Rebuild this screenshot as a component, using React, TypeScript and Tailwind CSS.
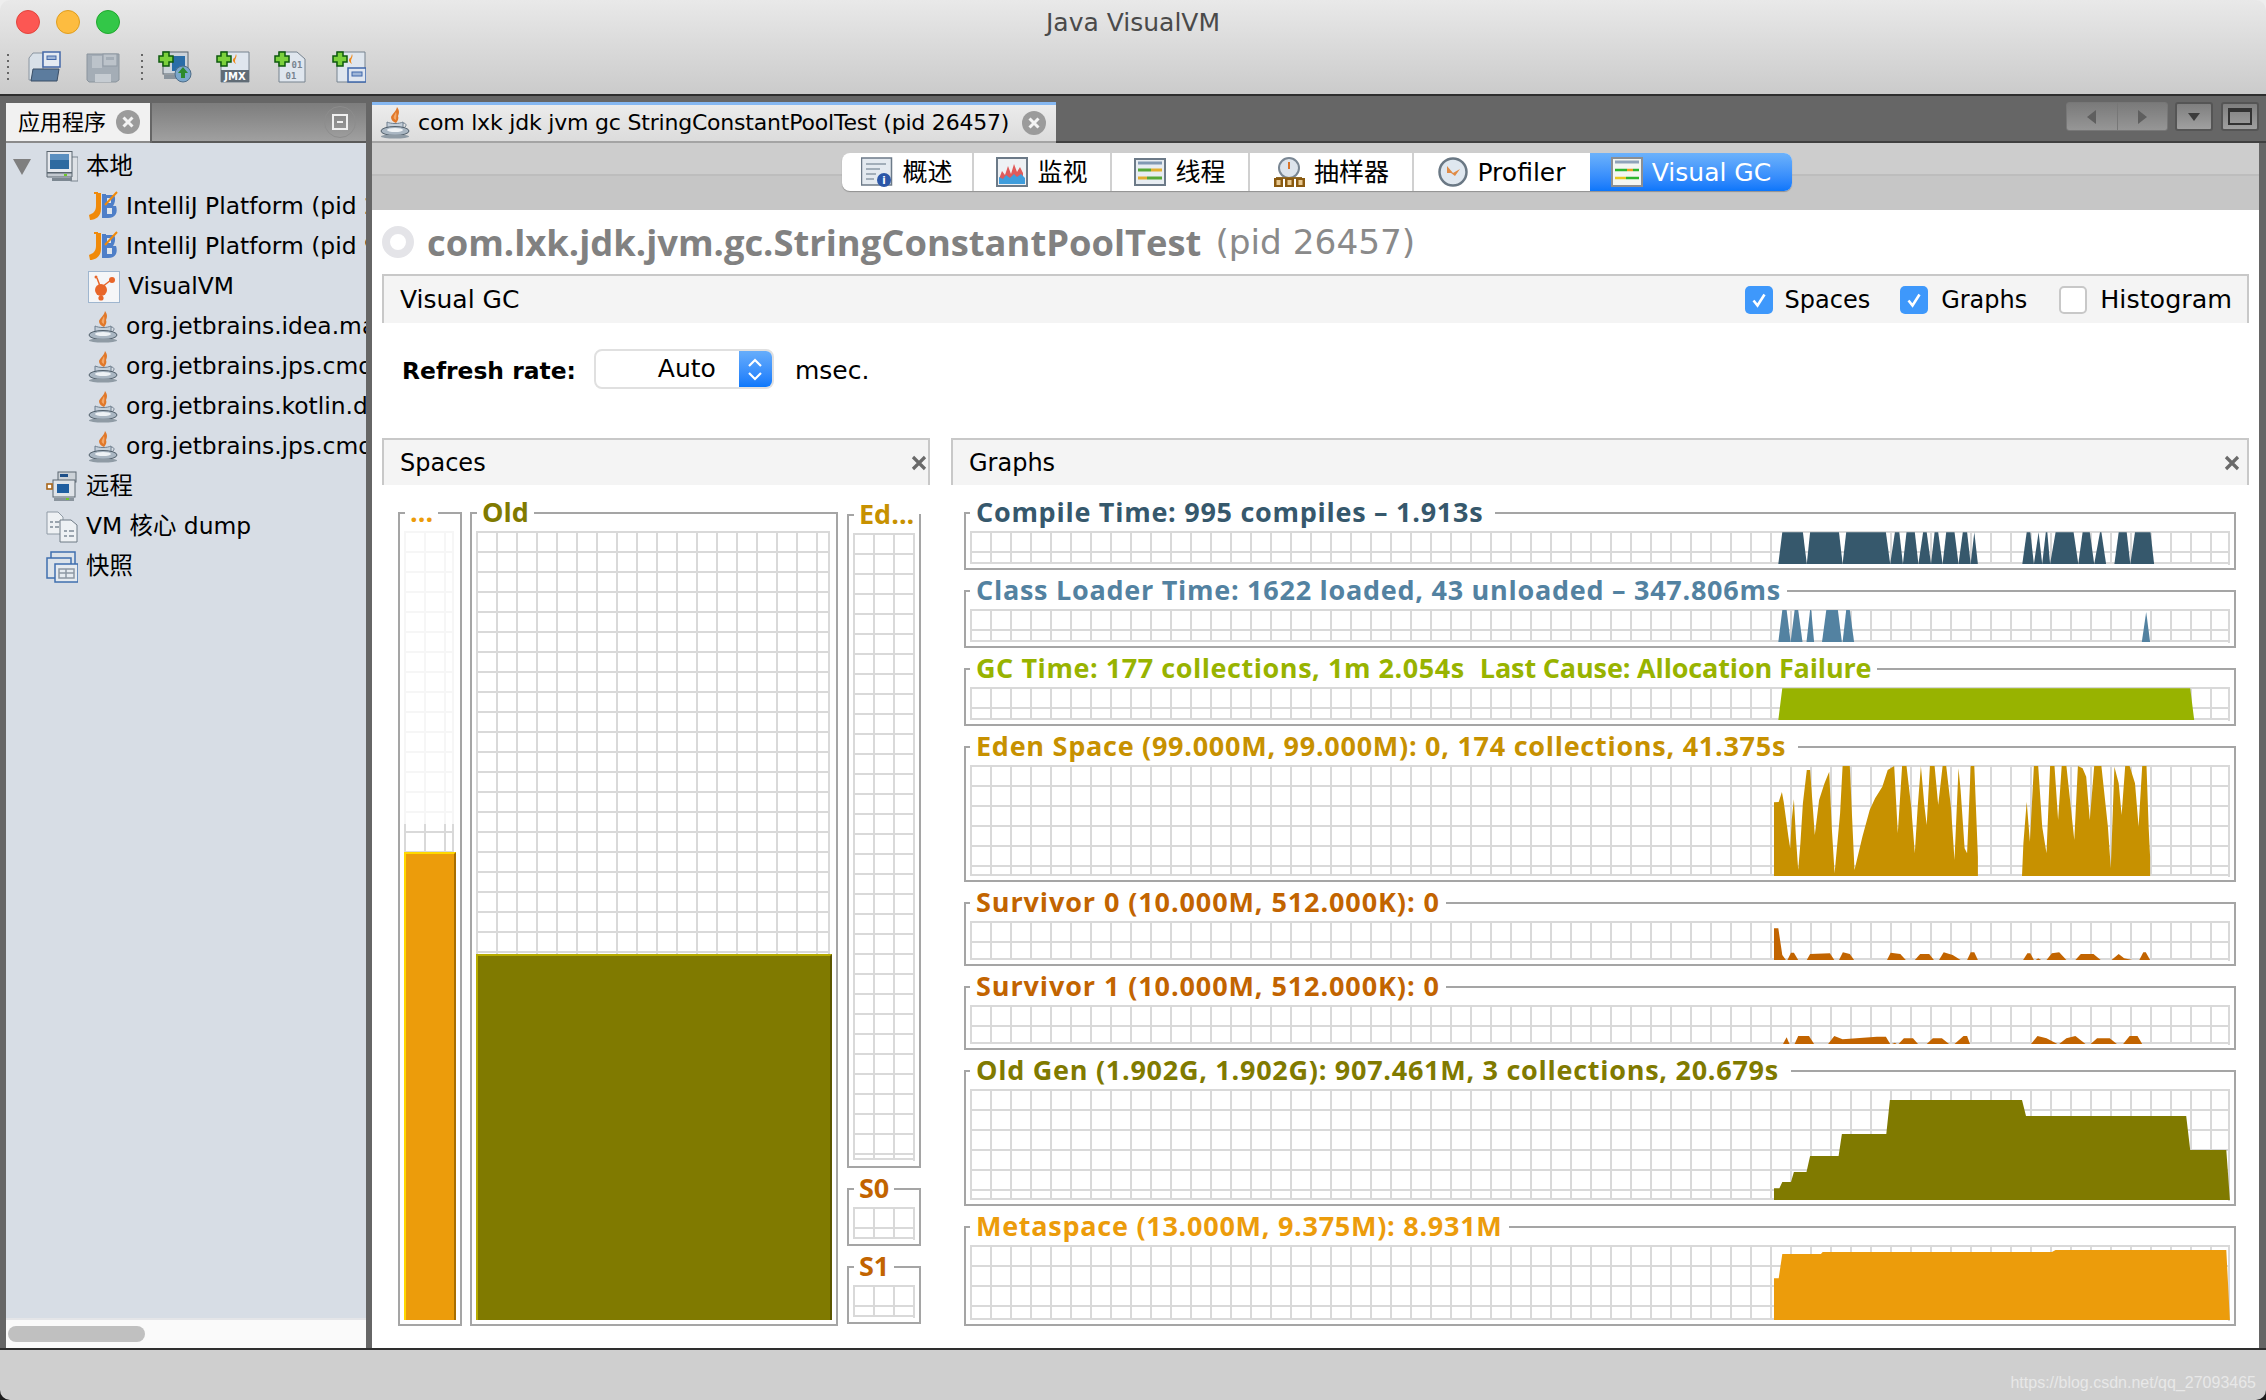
import React from "react";

type P = [number, number];
const zx = (x: number) => 1700 + x / 2.7703;

const C = {
  compile: "#36586c",
  cls: "#5382a1",
  gc: "#98b300",
  eden: "#c79100",
  surv: "#c26400",
  old: "#807a00",
  meta: "#ec9c0b",
};

function Grid({ w, h, fade }: { w: number; h: number; fade?: number }) {
  const v: number[] = [];
  for (let x = 1; x < w; x += 20) v.push(x);
  const hz: number[] = [];
  for (let y = 1; y < h - 4; y += 20) hz.push(y);
  return (
    <g stroke="#d9d9d9" strokeWidth="2" shapeRendering="crispEdges">
      {v.map((x) => (
        <line key={"v" + x} x1={x} x2={x} y1={0} y2={h - 2} />
      ))}
      {hz.map((y) => (
        <line key={"h" + y} x1={0} x2={w} y1={y} y2={y} />
      ))}
      <line x1={0} x2={w} y1={h - 2} y2={h - 2} />
      <line x1={w - 1} x2={w - 1} y1={0} y2={h} />
      {fade ? <rect x={0} y={0} width={w} height={fade} fill="#ffffff" fillOpacity="0.75" stroke="none" /> : null}
    </g>
  );
}

function trap(a: number, b: number, c: number, d: number, top: number, bot: number): P[] {
  return [[a, bot], [b, top], [c, top], [d, bot]];
}

function hump(pts: number[], bot: number): P[] {
  const r: P[] = [];
  for (let i = 0; i < pts.length; i += 2) r.push([pts[i], pts[i + 1]]);
  return r.map((p) => [p[0], p[1] >= bot ? bot : p[1]]);
}

function Chart({ w = 1262, h, baseY, top, color, shapes }: { w?: number; h: number; baseY: number; top: number; color: string; shapes: P[][] }) {
  return (
    <svg width={w} height={h} className="block">
      <Grid w={w - 2} h={h} />
      {shapes.map((s, i) => (
        <polygon
          key={i}
          fill={color}
          points={s.map(([x, y]) => `${(zx(x) - 970).toFixed(1)},${(baseY + y / 3 - top).toFixed(1)}`).join(" ")}
        />
      ))}
    </svg>
  );
}

const compileShapes: P[][] = [
  [217, 228, 285, 296], [296, 305, 385, 395], [395, 405, 515, 527], [527, 540, 552, 562], [562, 572, 595, 605],
  [605, 618, 628, 640], [640, 650, 660, 672], [672, 682, 705, 716], [716, 728, 740, 750], [750, 760, 760, 770],
  [893, 905, 915, 925], [925, 938, 938, 948], [948, 958, 962, 970], [970, 985, 1035, 1048], [1048, 1060, 1080, 1092],
  [1092, 1108, 1112, 1125], [1148, 1160, 1182, 1192], [1192, 1205, 1248, 1258],
].map(([a, b, c, d]) => trap(a, b, c, d, 127, 222));

const classShapes: P[][] = [
  ...[[217, 228, 240, 251], [251, 262, 272, 284], [295, 305, 308, 316], [338, 350, 382, 393], [395, 405, 415, 427]].map(([a, b, c, d]) =>
    trap(a, b, c, d, 360, 456)
  ),
  trap(1224, 1236, 1236, 1247, 366, 456),
];

const gcShapes: P[][] = [trap(217, 228, 1358, 1369, 595, 690)];

const edenShapes: P[][] = [
  hump([205,1158,205,937,218,936,227,906,232,935,245,1040,250,1075,254,990,260,928,266,1045,272,1140,278,1060,285,940,296,840,305,840,318,1035,330,930,345,880,358,845,365,1015,373,1150,388,970,395,828,415,828,420,950,428,1140,450,1040,470,960,485,925,505,890,520,840,538,828,548,1030,560,828,572,828,585,950,595,1090,603,950,612,828,622,950,628,1005,637,828,650,828,660,945,672,828,682,828,695,950,705,1110,716,835,722,900,733,1075,740,1090,750,828,760,828,770,1100,770,1158], 1158),
  hump([892,1158,896,1060,905,935,914,1055,925,828,937,828,948,1010,960,1090,970,828,982,828,992,990,1002,828,1015,828,1037,1050,1047,828,1060,835,1070,860,1080,990,1092,828,1112,828,1130,1010,1138,1135,1148,830,1160,880,1168,975,1178,828,1190,828,1205,880,1215,1010,1225,828,1237,828,1243,1015,1247,1100,1247,1158], 1158),
];

const s0Shapes: P[][] = [
  [205,240,205,145,217,145,228,225,238,240],[242,240,252,218,260,218,272,240],[296,240,305,222,360,220,372,240],[385,240,396,217,415,222,427,240],[518,240,528,218,555,222,570,240],[595,240,610,222,635,222,648,240],[662,240,675,217,700,225,722,240],[740,240,750,217,760,217,770,240],[895,240,907,220,915,220,925,240],[930,240,937,235,945,240],[960,240,975,220,995,217,1015,240],[1040,240,1055,222,1090,222,1110,240],[1140,240,1160,222,1175,235,1198,240],[1217,240,1228,217,1235,217,1247,240],
].map((a) => hump(a, 240));

const s1Shapes: P[][] = [
  [230,492,240,472,248,492],[262,492,272,468,302,468,316,492],[355,492,372,468,395,478,490,470,515,470,527,492],[532,492,540,488,545,492],[550,492,565,475,590,475,604,492],[628,492,645,475,670,475,690,492],[705,492,730,468,740,468,748,492],[917,492,935,468,960,475,990,492],[995,492,1015,475,1040,468,1068,492],[1082,492,1100,475,1135,475,1155,492],[1172,492,1190,468,1212,468,1225,492],
].map((a) => hump(a, 492));

const oldShapes: P[][] = [
  hump([205,960,205,925,220,925,228,906,252,906,260,876,295,876,305,828,384,828,393,762,516,762,526,660,892,660,903,708,1347,708,1358,810,1458,810,1468,960], 960),
];
const metaShapes: P[][] = [
  hump([205,1320,205,1195,218,1195,228,1122,335,1122,340,1116,975,1116,985,1110,1458,1110,1468,1320], 1320),
];

function GraphFrame({ title, color, wide, children }: { title: React.ReactNode; color: string; wide?: boolean; children: React.ReactNode }) {
  return (
    <div className="relative border-2 border-[#a5a5a5] pl-[4px] pt-[17px] pb-[3px]">
      <span
        className={`absolute left-[4px] top-[-19px] h-[34px] bg-white pl-[6px] whitespace-pre text-[27px] leading-[34px] font-bold tracking-[0.73px] ${wide ? "pr-[12px]" : "pr-[6px]"}`}
        style={{ color, fontFamily: "'Open Sans', sans-serif" }}
      >
        {title}
      </span>
      {children}
    </div>
  );
}

function SpaceFrame({ title, color, className, w, h, fill, fade, gridTop }: { title: string; color: string; className: string; w: number; h: number; fill?: number; fade?: number; gridTop: string }) {
  return (
    <div className={`relative border-2 border-[#a5a5a5] ${className}`}>
      <span
        className="absolute left-[5px] top-[-19px] h-[34px] bg-white px-[5px] whitespace-pre text-[27px] leading-[34px] font-bold"
        style={{ color, fontFamily: "'Open Sans', sans-serif" }}
      >
        {title}
      </span>
      <div className={`ml-[4px] relative w-fit ${gridTop}`}>
        <svg width={w} height={h} className="block">
          <Grid w={w} h={h} fade={fade} />
        </svg>
        {fill ? (
          <div
            className="absolute left-0 right-[-2px] bottom-0 border-t-2 border-l-2 border-r-2"
            style={{
              height: fill,
              background: color,
              borderTopColor: title === "Old" ? "#b8ac00" : "#ffd800",
              borderLeftColor: title === "Old" ? "#b8ac00" : "#ffd800",
              borderRightColor: title === "Old" ? "#5c5600" : "#a86e00",
            }}
          />
        ) : null}
      </div>
    </div>
  );
}

/* ---------- icons ---------- */
function JavaCup() {
  return (
    <svg width="30" height="32" viewBox="0 0 30 32" className="shrink-0">
      <path d="M17 0c3 4 2 7 1 9 1 2 0 5-2 7-3-1-5-3-5-6 1-3 5-5 6-10z" fill="#e0782a" />
      <path d="M16 5c1 3 0 5 0 8-2-1-3-2-2-4z" fill="#f4a868" />
      <path d="M7 15c4 2 12 2 16 0v5c-1 4-14 4-16 0z" fill="#c4cfda" stroke="#6f7f8e" />
      <path d="M23 16c4 0 4 4 0 5" fill="none" stroke="#6f7f8e" />
      <ellipse cx="15" cy="24" rx="14" ry="4.5" fill="#aab7c3" stroke="#52606c" />
      <ellipse cx="15" cy="23" rx="8" ry="2" fill="#eef2f5" />
      <ellipse cx="15" cy="29.5" rx="14" ry="2" fill="#8f9ba5" />
    </svg>
  );
}
function IJIcon() {
  return (
    <svg width="30" height="32" viewBox="0 0 30 32" className="shrink-0">
      <path d="M14 3h4v12h10c2 6 0 12-8 12h-6z" fill="#4f7fc8" />
      <path d="M19 6h5v5h-5zM19 17h5v6h-5z" fill="#dfe5ec" />
      <path d="M14 4h12c2 3 1 8-1 11H14z" fill="#4f7fc8" />
      <path d="M19 7h4v5h-4z" fill="#dfe5ec" />
      <path d="M8 2h5v16c0 7-5 11-11 11l-1-5 4-2c2-2 3-4 3-7z" fill="#f08a0a" />
      <path d="M6 2h4M17 14L29 1" stroke="#f08a0a" strokeWidth="2" />
    </svg>
  );
}
function VVMIcon() {
  return (
    <svg width="32" height="32" viewBox="0 0 32 32" className="shrink-0">
      <rect x="0.5" y="0.5" width="31" height="31" fill="#f5f6f8" stroke="#9fb6cf" />
      <circle cx="13" cy="19" r="6" fill="#e8662a" />
      <circle cx="13" cy="27" r="2.6" fill="#e8662a" />
      <circle cx="24" cy="9" r="3" fill="#e8662a" />
      <circle cx="8" cy="6" r="1.5" fill="#e8662a" />
      <path d="M14 16l9-7M9 7l3 8" stroke="#e8662a" strokeWidth="1.5" />
    </svg>
  );
}
function ComputerIcon() {
  return (
    <svg width="32" height="32" viewBox="0 0 32 32" className="shrink-0">
      <rect x="25" y="6" width="7" height="24" fill="#dde1e6" stroke="#7a8590" />
      <rect x="1" y="0.5" width="25" height="21" fill="#e6e9ee" stroke="#5b6670" />
      <rect x="4" y="3" width="19" height="15" fill="#2e6aa0" />
      <rect x="4" y="3" width="19" height="6" fill="#5a8fc0" />
      <path d="M1 22h25v4H1z" fill="#c3c9d0" stroke="#5b6670" />
      <rect x="18" y="23" width="3" height="2" fill="#6ec82a" />
      <path d="M6 27h20v3H6z" fill="#7c8791" />
    </svg>
  );
}
function RemoteIcon() {
  return (
    <svg width="32" height="32" viewBox="0 0 32 32" className="shrink-0">
      <rect x="12" y="1" width="18" height="10" fill="#ccd2d8" stroke="#5b6670" />
      <rect x="14" y="3" width="8" height="3" fill="#1e4f88" />
      <rect x="7" y="9" width="22" height="17" fill="#dfe3e8" stroke="#5b6670" />
      <rect x="11" y="13" width="12" height="9" fill="#1f5ea0" />
      <rect x="1" y="13" width="5" height="5" fill="#fff" stroke="#a8651a" strokeWidth="1.6" />
      <path d="M8 27h20v3H8z" fill="#8a949d" />
      <rect x="20" y="27" width="3" height="2" fill="#6ec82a" />
    </svg>
  );
}
function DumpIcon() {
  return (
    <svg width="32" height="32" viewBox="0 0 32 32" className="shrink-0">
      <path d="M1 1h11l5 5v17H1z" fill="#eef1f4" stroke="#8f9aa5" />
      <path d="M14 9h11l6 5v17H14z" fill="#eef1f4" stroke="#6f7a85" />
      <path d="M4 11h3M9 11h5M4 16h3M9 16h4M18 20h3M23 20h5M18 25h3M23 25h5" stroke="#9aa4ae" strokeWidth="2" />
    </svg>
  );
}
function SnapIcon() {
  return (
    <svg width="32" height="32" viewBox="0 0 32 32" className="shrink-0">
      <rect x="5" y="1" width="24" height="20" fill="#dce3ea" stroke="#3f6fae" strokeWidth="1.5" />
      <rect x="1" y="7" width="24" height="20" fill="#dce3ea" stroke="#3f6fae" strokeWidth="1.5" />
      <rect x="9" y="13" width="23" height="18" fill="#e6ebf0" stroke="#3f6fae" strokeWidth="1.5" />
      <path d="M13 18h15v9H13zM20 18v9M13 22h15" fill="none" stroke="#8d98a3" strokeWidth="1.5" />
    </svg>
  );
}
function Plus() {
  return <path d="M5 1h6v4h4v6h-4v4H5v-4H1V5h4z" fill="#7bd13c" stroke="#0e5a0e" strokeWidth="1.5" />;
}
function TbOpen() {
  return (
    <svg width="34" height="32" viewBox="0 0 34 32">
      <path d="M1 29V7l4-5h10v26z" fill="#d8e0e8" stroke="#8a95a0" />
      <rect x="15" y="1" width="17" height="15" fill="#e4eaf2" stroke="#4468a8" strokeWidth="1.5" />
      <rect x="19" y="5" width="9" height="3.5" fill="#9fb6d8" stroke="#4468a8" />
      <path d="M5 18h26l-2 12H3z" fill="#5c7c9e" stroke="#3a4e66" />
    </svg>
  );
}
function TbSave() {
  return (
    <svg width="34" height="32" viewBox="0 0 34 32">
      <path d="M1 3h32v26l-3 2H3l-2-2z" fill="#a4adb6" stroke="#8a949d" />
      <path d="M6 5h10v12H6z" fill="#bcc3ca" />
      <rect x="17" y="3" width="14" height="12" fill="#bcc3ca" stroke="#8f99a3" />
      <rect x="20" y="6" width="8" height="3" fill="#a4adb6" />
      <path d="M9 23h16v8H9z" fill="#c6ccd2" />
    </svg>
  );
}
function TbConnect() {
  return (
    <svg width="34" height="32" viewBox="0 0 34 32">
      <rect x="5" y="1" width="25" height="22" fill="#ccd3da" stroke="#5b6670" />
      <rect x="14" y="5" width="13" height="15" fill="#2a6da8" />
      <path d="M6 24h24v4H6z" fill="#8a949d" />
      <circle cx="25" cy="23" r="8" fill="#7aa7cc" stroke="#4d6c88" />
      <path d="M25 16l5 6h-3v5h-4v-5h-3z" fill="#2d8a2d" />
      <Plus />
    </svg>
  );
}
function TbJava({ kind }: { kind: "jmx" | "bin" | "snap" }) {
  return (
    <svg width="34" height="32" viewBox="0 0 34 32">
      <path d={kind === "bin" ? "M5 1h18l8 7v23H5z" : "M5 1h28v30H5z"} fill="#dfe6ee" stroke="#77838f" />
      {kind !== "bin" ? <path d="M20 3c2 4-3 5 0 10-3-2-4-4-2-6 1 0 1-1 2-4z" fill="#ef8a1c" /> : null}
      {kind === "jmx" ? (
        <>
          <rect x="5" y="19" width="28" height="12" fill="#616c76" />
          <text x="19" y="29" fontSize="10" fontWeight="bold" fill="#fff" textAnchor="middle" fontFamily="DejaVu Sans">JMX</text>
        </>
      ) : null}
      {kind === "bin" ? (
        <>
          <text x="23" y="17" fontSize="9" fontWeight="bold" fill="#77838f" textAnchor="middle" fontFamily="DejaVu Sans Mono">01</text>
          <text x="17" y="28" fontSize="9" fontWeight="bold" fill="#77838f" textAnchor="middle" fontFamily="DejaVu Sans Mono">01</text>
        </>
      ) : null}
      {kind === "snap" ? (
        <>
          <rect x="16" y="17" width="18" height="14" fill="#dfe6f0" stroke="#3f67aa" strokeWidth="1.5" />
          <rect x="20" y="21" width="10" height="4" fill="#9fb6d8" stroke="#3f67aa" />
        </>
      ) : null}
      <Plus />
    </svg>
  );
}
function Grip() {
  return (
    <div className="flex h-[26px] w-[2px] flex-col justify-between">
      {[0, 1, 2, 3, 4].map((i) => (
        <div key={i} className="h-[2px] w-[2px] bg-[#666]" />
      ))}
    </div>
  );
}
function OverviewIcon() {
  return (
    <svg width="32" height="30" viewBox="0 0 32 30" className="shrink-0">
      <rect x="0.5" y="1" width="30" height="27" fill="#e4eaf0" stroke="#6c7a88" strokeWidth="1.5" />
      <path d="M5 7h20M5 12h14M5 17h10M5 22h8" stroke="#a2aeb9" strokeWidth="2" />
      <circle cx="23" cy="23" r="7" fill="#2c57a8" />
      <text x="23" y="27" fontSize="10" fontWeight="bold" fill="#fff" textAnchor="middle" fontFamily="DejaVu Sans">i</text>
    </svg>
  );
}
function MonitorIcon() {
  return (
    <svg width="32" height="30" viewBox="0 0 32 30" className="shrink-0">
      <rect x="1" y="1" width="30" height="28" fill="#eef1f4" stroke="#6c7a88" strokeWidth="2" />
      <path d="M3 22l3-8 3 4 3-9 3 8 3-10 3 8 3-5 3 6v11H3z" fill="#e05a5a" />
      <path d="M3 27v-7l4 2 3-4 4 3 4-4 3 3 4-3 4 4v6z" fill="#3f9ddc" />
    </svg>
  );
}
function ThreadsIcon() {
  return (
    <svg width="32" height="28" viewBox="0 0 32 28" className="shrink-0">
      <rect x="1" y="1" width="30" height="26" fill="#e8edf2" stroke="#6c7a88" strokeWidth="2" />
      <path d="M4 5h24" stroke="#8199b3" strokeWidth="3" />
      <path d="M4 12h13" stroke="#56a838" strokeWidth="3" />
      <path d="M17 12h11" stroke="#e0b030" strokeWidth="3" />
      <path d="M4 20h9" stroke="#e0b030" strokeWidth="3" />
      <path d="M13 20h15" stroke="#56a838" strokeWidth="3" />
    </svg>
  );
}
function SamplerIcon() {
  return (
    <svg width="32" height="30" viewBox="0 0 32 30" className="shrink-0">
      <circle cx="16" cy="11" r="10" fill="#dde4ec" stroke="#7a8794" strokeWidth="2" />
      <path d="M16 5v7" stroke="#d8742a" strokeWidth="2" />
      <path d="M3 21h26" stroke="#8f6a2a" strokeWidth="2" />
      {[0, 11, 22].map((x) => (
        <g key={x}>
          <rect x={x + 1} y="21" width="9" height="9" fill="#8a5a10" />
          <rect x={x + 3.5} y="23" width="4" height="5" fill="#e8c890" />
        </g>
      ))}
    </svg>
  );
}
function ClockIcon() {
  return (
    <svg width="30" height="30" viewBox="0 0 30 30" className="shrink-0">
      <circle cx="15" cy="15" r="13.5" fill="#dfe7ef" stroke="#6a7884" strokeWidth="2.5" />
      <path d="M9 9l6 7 7-4-5 7-4-3-4 0z" fill="#e08a44" />
    </svg>
  );
}
function GcIcon() {
  return (
    <svg width="32" height="30" viewBox="0 0 32 30" className="shrink-0">
      <rect x="1" y="1" width="30" height="28" fill="#f3f6f2" stroke="#8c8f92" strokeWidth="2" />
      <path d="M4 5h24" stroke="#8fa3ba" strokeWidth="3" />
      <path d="M4 13h12" stroke="#2cb52c" strokeWidth="2.5" />
      <path d="M16 13h6" stroke="#e8a020" strokeWidth="2.5" />
      <path d="M22 13h6" stroke="#2cb52c" strokeWidth="2.5" />
      <path d="M4 21h11" stroke="#e8c820" strokeWidth="2.5" />
      <path d="M15 21h13" stroke="#2cb52c" strokeWidth="2.5" />
    </svg>
  );
}
function CloseDot({ className = "" }: { className?: string }) {
  return (
    <svg width="24" height="24" viewBox="0 0 24 24" className={`shrink-0 ${className}`}>
      <circle cx="12" cy="12" r="12" fill="#9b9b9b" />
      <path d="M7.5 7.5l9 9M16.5 7.5l-9 9" stroke="#f4f4f4" strokeWidth="3" />
    </svg>
  );
}
function SmallX() {
  return (
    <svg width="16" height="16" viewBox="0 0 16 16" className="shrink-0">
      <path d="M2 2l12 12M14 2L2 14" stroke="#6a6a6a" strokeWidth="3.2" />
    </svg>
  );
}
function Check({ on }: { on: boolean }) {
  return (
    <div className={`flex h-[28px] w-[28px] items-center justify-center rounded-[5px] ${on ? "bg-[#3e98fb]" : "border-2 border-[#c8c8c8] bg-white"}`}>
      {on ? (
        <svg width="20" height="20" viewBox="0 0 20 20">
          <path d="M4.5 10.5l4 5 7-11" fill="none" stroke="#fff" strokeWidth="2.6" />
        </svg>
      ) : null}
    </div>
  );
}

function TreeRow({ icon, text, child }: { icon: React.ReactNode; text: string; child?: boolean }) {
  return (
    <div className={`flex h-[40px] items-center whitespace-pre gap-[8px] ${child ? "pl-[82px]" : "pl-[40px]"}`}>
      <div className="flex w-[32px] justify-center">{icon}</div>
      <span className="text-[23.4px] text-black">{text}</span>
    </div>
  );
}

function SubTab({ icon, text, className }: { icon: React.ReactNode; text: string; className: string }) {
  return (
    <div className={`flex h-full items-center gap-[9px] text-[25px] ${className}`}>
      {icon}
      <span className="pt-[2px]">{text}</span>
    </div>
  );
}

export default function App() {
  return (
    <div
      className="flex h-[1400px] w-[2266px] flex-col overflow-hidden bg-[#eeeeee] text-black"
      style={{ fontFamily: "'DejaVu Sans', 'Noto Sans CJK SC', sans-serif" }}
    >
      {/* title bar + toolbar */}
      <div className="h-[94px] shrink-0 rounded-t-[10px] bg-gradient-to-b from-[#e9e9e9] to-[#cbcbcb]">
        <div className="relative flex h-[44px] items-center pl-[16px]">
          <div className="flex gap-[16px]">
            <div className="h-[24px] w-[24px] rounded-full border border-[#e2443c] bg-[#fc5753]" />
            <div className="h-[24px] w-[24px] rounded-full border border-[#e09e1e] bg-[#fdbc40]" />
            <div className="h-[24px] w-[24px] rounded-full border border-[#1fa82d] bg-[#33c748]" />
          </div>
          <div className="absolute inset-x-0 top-[8px] text-center text-[25px] leading-[30px] text-[#4a4a4a]">Java VisualVM</div>
        </div>
        <div className="mt-[6px] flex h-[34px] items-center pl-[7px]">
          <Grip />
          <div className="ml-[19px]"><TbOpen /></div>
          <div className="ml-[24px]"><TbSave /></div>
          <div className="ml-[21px]"><Grip /></div>
          <div className="ml-[15px]"><TbConnect /></div>
          <div className="ml-[24px]"><TbJava kind="jmx" /></div>
          <div className="ml-[24px]"><TbJava kind="bin" /></div>
          <div className="ml-[24px]"><TbJava kind="snap" /></div>
        </div>
      </div>

      {/* main area */}
      <div className="flex h-[1256px] shrink-0 border-y-2 border-y-[#2e2e2e] bg-[#666666]">
        {/* left column */}
        <div className="flex w-[366px] shrink-0 flex-col pl-[6px] pt-[7px]">
          <div className="flex h-[40px] shrink-0">
            <div className="flex w-[144px] items-center gap-[10px] border-b-2 border-[#8a8a8a] bg-[#f1f1f1] pl-[12px] text-[22px]">
              <span>应用程序</span>
              <CloseDot />
            </div>
            <div className="ml-[2px] flex flex-1 items-center justify-end border-b-2 border-[#5a5a5a] bg-gradient-to-b from-[#7d7d7d] to-[#a0a0a0] pr-[10px]">
              <div className="flex h-[32px] w-[32px] items-center justify-center rounded-full border border-[#8d8d8d]">
                <div className="flex h-[16px] w-[16px] items-center justify-center border-2 border-[#f0f0f0]">
                  <div className="h-[2px] w-[6px] bg-[#f0f0f0]" />
                </div>
              </div>
            </div>
          </div>
          <div className="flex-1 overflow-hidden bg-[#d7dde5] pt-[4px]">
            <div className="relative flex h-[40px] items-center whitespace-pre pl-[40px] gap-[8px]">
              <svg width="18" height="16" viewBox="0 0 18 16" className="absolute left-[7px] top-[12px]">
                <path d="M0 0h18L9 16z" fill="#7f7f7f" />
              </svg>
              <div className="flex w-[32px] justify-center"><ComputerIcon /></div>
              <span className="text-[23.4px]">本地</span>
            </div>
            <TreeRow child icon={<IJIcon />} text="IntelliJ Platform (pid 26431)" />
            <TreeRow child icon={<IJIcon />} text="IntelliJ Platform (pid 9876)" />
            <TreeRow child icon={<VVMIcon />} text="VisualVM" />
            <TreeRow child icon={<JavaCup />} text="org.jetbrains.idea.maven" />
            <TreeRow child icon={<JavaCup />} text="org.jetbrains.jps.cmdline" />
            <TreeRow child icon={<JavaCup />} text="org.jetbrains.kotlin.daemon" />
            <TreeRow child icon={<JavaCup />} text="org.jetbrains.jps.cmdline" />
            <TreeRow icon={<RemoteIcon />} text="远程" />
            <TreeRow icon={<DumpIcon />} text="VM 核心 dump" />
            <TreeRow icon={<SnapIcon />} text="快照" />
          </div>
          <div className="flex h-[30px] shrink-0 items-center border-t-2 border-t-[#e4e5e8] bg-[#fafafa] pl-[2px]">
            <div className="h-[16px] w-[137px] rounded-full bg-[#c0c0c0]" />
          </div>
        </div>

        {/* right column */}
        <div className="flex w-[1900px] flex-col">
          {/* doc tab strip */}
          <div className="flex h-[47px] shrink-0 pl-[6px] pt-[6px]">
            <div className="flex w-[684px] items-center border-t-[3px] border-t-[#86b8f2] border-b-2 border-b-[#a4a4a4] bg-gradient-to-b from-[#ececec] to-[#dcdcdc] pl-[8px]">
              <JavaCup />
              <span className="ml-[8px] whitespace-pre pb-[2px] text-[22px] tracking-[-0.2px]">com lxk jdk jvm gc StringConstantPoolTest (pid 26457)</span>
              <CloseDot className="ml-[13px]" />
            </div>
            <div className="flex flex-1 justify-end border-b-2 border-b-[#404040] pr-[7px]">
              <div className="mr-[7px] flex h-[29px] w-[102px] rounded-[3px] border border-[#777] bg-gradient-to-b from-[#7a7a7a] to-[#969696]">
                <div className="flex flex-1 items-center justify-center border-r border-[#777]">
                  <svg width="9" height="14"><path d="M9 0v14L0 7z" fill="#5f5f5f" /></svg>
                </div>
                <div className="flex flex-1 items-center justify-center">
                  <svg width="9" height="14"><path d="M0 0v14l9-7z" fill="#5f5f5f" /></svg>
                </div>
              </div>
              <div className="mr-[8px] flex h-[29px] w-[38px] items-center justify-center rounded-[3px] border-2 border-[#555] bg-gradient-to-b from-[#7f7f7f] to-[#a0a0a0]">
                <svg width="12" height="8"><path d="M0 0h12L6 8z" fill="#3c3c3c" /></svg>
              </div>
              <div className="flex h-[29px] w-[38px] items-center justify-center rounded-[3px] border-2 border-[#555] bg-gradient-to-b from-[#7f7f7f] to-[#a0a0a0]">
                <div className="h-[17px] w-[24px] border-2 border-t-[4px] border-[#333]" />
              </div>
            </div>
          </div>

          <div className="mr-[7px] ml-[6px] flex flex-1 flex-col bg-white">
            {/* sub tabs */}
            <div className="relative h-[67px] shrink-0 bg-[#c6c6c6] pl-[470px] pt-[10px]">
              <div className="absolute inset-x-0 top-0 h-[33px] border-b-2 border-b-[#bdbdbd] bg-[#cdcdcd]" />
              <div className="relative flex h-[38px] w-[950px] overflow-hidden rounded-[8px] bg-white shadow-[0_1px_1px_#8f8f8f]">
                <SubTab className="w-[132px] justify-center border-r-2 border-r-[#d0d0d0]" icon={<OverviewIcon />} text="概述" />
                <SubTab className="w-[138px] justify-center border-r-2 border-r-[#d0d0d0]" icon={<MonitorIcon />} text="监视" />
                <SubTab className="w-[138px] justify-center border-r-2 border-r-[#d0d0d0]" icon={<ThreadsIcon />} text="线程" />
                <SubTab className="w-[164px] justify-center border-r-2 border-r-[#d0d0d0]" icon={<SamplerIcon />} text="抽样器" />
                <SubTab className="w-[176px] justify-center" icon={<ClockIcon />} text="Profiler" />
                <SubTab className="flex-1 justify-center bg-gradient-to-b from-[#6cb2fb] to-[#0a76fb] text-white" icon={<GcIcon />} text="Visual GC" />
              </div>
            </div>

            {/* title */}
            <div className="flex h-[64px] shrink-0 items-center pl-[10px]">
              <div className="h-[32px] w-[32px] rounded-full border-[8px] border-[#e4e4e8]" />
              <span className="ml-[13px] whitespace-pre text-[36.35px] leading-[44px] font-bold text-[#818181]" style={{ fontFamily: "'Open Sans', sans-serif" }}>
                com.lxk.jdk.jvm.gc.StringConstantPoolTest
              </span>
              <span className="ml-[14px] whitespace-pre text-[34.3px] leading-[44px] text-[#8a8a8a]">(pid 26457)</span>
            </div>

            {/* Visual GC bar */}
            <div className="ml-[10px] flex h-[49px] w-[1867px] shrink-0 items-center border-x-2 border-t-2 border-x-[#c8c8c8] border-t-[#c8c8c8] bg-[#f4f4f4] pl-[16px] pr-[15px] text-[24px]">
              <span className="flex-1 text-[25px]">Visual GC</span>
              <div className="ml-[1px]"><Check on /></div>
              <span className="ml-[12px]">Spaces</span>
              <div className="ml-[30px]"><Check on /></div>
              <span className="ml-[13px]">Graphs</span>
              <div className="ml-[32px]"><Check on={false} /></div>
              <span className="ml-[13px] text-[25.4px]">Histogram</span>
            </div>

            {/* refresh */}
            <div className="flex h-[115px] shrink-0 items-start pl-[30px] pt-[26px]">
              <span className="h-[40px] text-[23.4px] leading-[44px] font-bold">Refresh rate:</span>
              <div className="ml-[18px] flex h-[40px] w-[180px] overflow-hidden rounded-[8px] border-2 border-[#e0e0e0] bg-white">
                <div className="flex flex-1 items-center justify-end pr-[23px] text-[25px]">Auto</div>
                <div className="flex w-[33px] flex-col items-center justify-center gap-[5px] bg-gradient-to-b from-[#66adfb] to-[#0b78fb]">
                  <svg width="16" height="9"><path d="M2 8l6-6 6 6" fill="none" stroke="#fff" strokeWidth="2.2" /></svg>
                  <svg width="16" height="9"><path d="M2 1l6 6 6-6" fill="none" stroke="#fff" strokeWidth="2.2" /></svg>
                </div>
              </div>
              <span className="ml-[21px] text-[25px] leading-[44px]">msec.</span>
            </div>

            {/* panels */}
            <div className="flex flex-1 pl-[10px]">
              <div className="w-[548px] shrink-0">
                <div className="flex h-[47px] items-center justify-between border-x-2 border-t-2 border-x-[#c8c8c8] border-t-[#c8c8c8] bg-[#f4f4f4] pl-[16px] pr-[1px] text-[24px]">
                  <span>Spaces</span>
                  <SmallX />
                </div>
                <div className="flex pl-[16px] pt-[27px]">
                  <SpaceFrame title="..." color={C.meta} className="h-[814px] w-[64px]" gridTop="pt-[17px]" w={50} h={789} fill={468} fade={293} />
                  <div className="ml-[8px]">
                    <SpaceFrame title="Old" color={C.old} className="h-[814px] w-[368px]" gridTop="pt-[17px]" w={354} h={789} fill={366} />
                  </div>
                  <div className="ml-[9px] flex w-[74px] flex-col gap-[20px] pt-[2px]">
                    <SpaceFrame title="Ed..." color={C.eden} className="h-[654px] w-[74px]" gridTop="pt-[17px]" w={62} h={628} />
                    <SpaceFrame title="S0" color={C.surv} className="h-[58px] w-[74px]" gridTop="pt-[17px]" w={62} h={33} />
                    <SpaceFrame title="S1" color={C.surv} className="h-[58px] w-[74px]" gridTop="pt-[17px]" w={62} h={33} />
                  </div>
                </div>
              </div>

              <div className="ml-[21px] w-[1298px] shrink-0">
                <div className="flex h-[47px] items-center justify-between border-x-2 border-t-2 border-x-[#c8c8c8] border-t-[#c8c8c8] bg-[#f4f4f4] pl-[16px] pr-[7px] text-[24px]">
                  <span>Graphs</span>
                  <SmallX />
                </div>
                <div className="ml-[13px] flex w-[1272px] flex-col gap-[20px] pt-[27px]">
                  <GraphFrame wide title="Compile Time: 995 compiles – 1.913s" color={C.compile}>
                    <Chart h={34} baseY={490} top={531} color={C.compile} shapes={compileShapes} />
                  </GraphFrame>
                  <GraphFrame title="Class Loader Time: 1622 loaded, 43 unloaded – 347.806ms" color={C.cls}>
                    <Chart h={34} baseY={490} top={609} color={C.cls} shapes={classShapes} />
                  </GraphFrame>
                  <GraphFrame
                    title={
                      <>
                        <span className="tracking-[0.55px]">GC Time: 177 collections, 1m 2.054s  </span>
                        <span className="tracking-[-0.15px]">Last Cause: Allocation Failure</span>
                      </>
                    }
                    color={C.gc}
                  >
                    <Chart h={34} baseY={490} top={687} color={C.gc} shapes={gcShapes} />
                  </GraphFrame>
                  <GraphFrame wide title="Eden Space (99.000M, 99.000M): 0, 174 collections, 41.375s" color={C.eden}>
                    <Chart h={112} baseY={490} top={765} color={C.eden} shapes={edenShapes} />
                  </GraphFrame>
                  <GraphFrame title={<span className="tracking-[0.9px]">Survivor 0 (10.000M, 512.000K): 0</span>} color={C.surv}>
                    <Chart h={40} baseY={880} top={921} color={C.surv} shapes={s0Shapes} />
                  </GraphFrame>
                  <GraphFrame title={<span className="tracking-[0.9px]">Survivor 1 (10.000M, 512.000K): 0</span>} color={C.surv}>
                    <Chart h={40} baseY={880} top={1005} color={C.surv} shapes={s1Shapes} />
                  </GraphFrame>
                  <GraphFrame wide title="Old Gen (1.902G, 1.902G): 907.461M, 3 collections, 20.679s" color={C.old}>
                    <Chart h={112} baseY={880} top={1089} color={C.old} shapes={oldShapes} />
                  </GraphFrame>
                  <GraphFrame title="Metaspace (13.000M, 9.375M): 8.931M" color={C.meta}>
                    <Chart h={76} baseY={880} top={1245} color={C.meta} shapes={metaShapes} />
                  </GraphFrame>
                </div>
              </div>
            </div>
          </div>
        </div>
      </div>

      {/* status bar */}
      <div className="flex-1 bg-[#1c1c1c]">
        <div className="flex h-full items-center justify-end rounded-b-[10px] bg-[#cfcfcf] pr-[10px] pt-[16px]">
          <span className="text-[16px] text-[#e8e8e8]" style={{ fontFamily: "'Liberation Sans', sans-serif" }}>https://blog.csdn.net/qq_27093465</span>
        </div>
      </div>
    </div>
  );
}
